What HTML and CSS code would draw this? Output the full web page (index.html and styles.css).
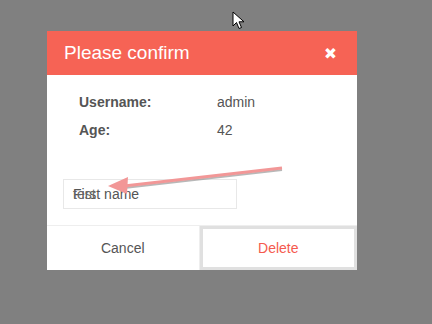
FILE: index.html
```
<!DOCTYPE html>
<html lang="en">
<head>
    <meta charset="UTF-8">
    <link rel="stylesheet" href="styles.css">
    <title>Please confirm</title>
</head>
<body>
    <div class="modal">
        <div class="modal-header">
            <span class="title">Please confirm</span>
            <span class="close">&#x2715;</span>
        </div>
        <div class="modal-body">
            <div class="row"><span class="label">Username:</span><span class="value">admin</span></div>
            <div class="row"><span class="label">Age:</span><span class="value">42</span></div>
            <div class="field">
                <input type="text" class="input" placeholder="First name">
                <span class="typed">test</span>
            </div>
        </div>
        <div class="modal-footer">
            <button class="btn cancel">Cancel</button>
            <button class="btn delete">Delete</button>
        </div>
    </div>

    <svg class="arrow" width="432" height="324" viewBox="0 0 432 324">
        <line x1="282" y1="170" x2="124" y2="188" stroke="#8a8a8a" stroke-width="2" opacity="0.6"/>
        <line x1="282" y1="168" x2="124" y2="186" stroke="#f29797" stroke-width="3"/>
        <polygon points="108,186 128,177 127,194" fill="#f29797"/>
    </svg>

    <svg class="cursor" width="14" height="20" viewBox="0 0 14 20">
        <path d="M1 1 L1 15 L4.5 11.5 L7 17.5 L9.5 16.5 L7 10.8 L12 10.8 Z" fill="#fff" stroke="#000" stroke-width="1"/>
    </svg>
</body>
</html>
```

FILE: styles.css
```
body {
    margin: 0;
    background-color: #808080;
    font-family: 'Liberation Sans', Arial, sans-serif;
    height: 324px;
    overflow: hidden;
}

.modal {
    width: 310px;
    margin-left: 47px;
    padding-top: 31px;
}

.modal-header {
    height: 44px;
    background-color: #f66355;
    display: flex;
    align-items: center;
    justify-content: space-between;
    padding: 0 21px 0 17px;
    color: #fff;
}

.title {
    font-size: 19px;
}

.close {
    font-size: 13px;
    font-weight: bold;
    -webkit-text-stroke: 1.4px #fff;
}

.modal-body {
    background-color: #fff;
    padding: 13px 16px 16px 16px;
}

.row {
    display: flex;
    height: 28px;
    align-items: center;
    padding-left: 16px;
    font-size: 14px;
    color: #555;
}

.label {
    width: 138px;
    font-weight: bold;
}

.field {
    position: relative;
    margin-top: 35px;
    width: 174px;
}

.input {
    box-sizing: border-box;
    width: 174px;
    height: 30px;
    border: 1px solid #e8e8e8;
    padding: 0 9px;
    font-family: 'Liberation Sans', Arial, sans-serif;
    font-size: 14px;
    outline: none;
}

.input::placeholder {
    color: #555;
}

.typed {
    position: absolute;
    left: 10px;
    top: 7px;
    font-size: 14px;
    color: #666;
}

.modal-footer {
    display: flex;
    background-color: #fff;
    border-top: 1px solid #eee;
}

.btn {
    flex: 1;
    height: 44px;
    background-color: #fff;
    border: none;
    font-family: 'Liberation Sans', Arial, sans-serif;
    font-size: 14px;
    cursor: pointer;
}

.cancel {
    color: #555;
    border-right: 1px solid #eee;
}

.delete {
    color: #f55a4e;
    border: 3px solid #e0e0e0;
}

.arrow {
    position: absolute;
    left: 0;
    top: 0;
}

.cursor {
    position: absolute;
    left: 232px;
    top: 11px;
}
```
